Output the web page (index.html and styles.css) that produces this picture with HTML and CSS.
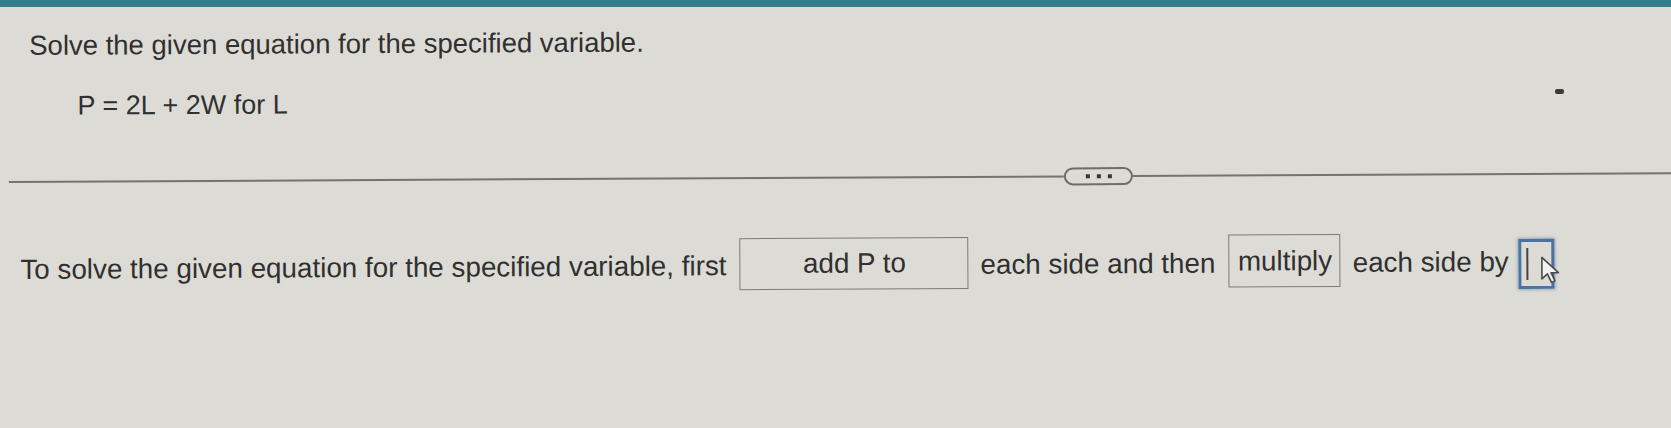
FILE: index.html
```html
<!DOCTYPE html>
<html lang="en">
<head>
<meta charset="utf-8">
<title>Solve the given equation</title>
<link rel="stylesheet" href="styles.css">
</head>
<body>
<div class="topbar"></div>
<main class="page">
  <h1 class="prompt">Solve the given equation for the specified variable.</h1>
  <p class="equation">P = 2L + 2W for L</p>
  <div class="divider">
    <span class="rule rule-left"></span>
    <span class="more" aria-label="More"><i></i><i></i><i></i></span>
    <span class="rule rule-right"></span>
  </div>
  <div class="answer">
    <span class="words">To solve the given equation for the specified variable, first</span>
    <span class="blank blank-wide">add P to</span>
    <span class="words">each side and then</span>
    <span class="blank">multiply</span>
    <span class="words">each side by</span>
    <span class="blank blank-focus">
      <span class="caret"></span>
      <svg class="pointer" viewBox="0 0 22 28" width="22" height="28">
        <path d="M1.5 1.5 L1.5 23 L7 18 L11 26.5 L14.5 25 L10.6 16.8 L18 16.8 Z" fill="#f2f2f0" stroke="#4a4a4a" stroke-width="1.6" stroke-linejoin="round"/>
      </svg>
    </span>
  </div>
</main>
<span class="smudge"></span>
</body>
</html>
```
FILE: styles.css
```css
html, body {
  margin: 0;
  padding: 0;
}

body {
  width: 1671px;
  height: 428px;
  overflow: hidden;
  background: #dcdbd5;
  color: #303030;
  font-family: "Liberation Sans", Arial, sans-serif;
  position: relative;
}

.topbar {
  height: 7px;
  background: #327e8b;
}

.page {
  padding-top: 23px;
  transform: rotate(-0.3deg);
  transform-origin: 0 0;
}

.prompt {
  margin: 0 0 0 29px;
  font-size: 27.5px;
  line-height: 32px;
  font-weight: normal;
}

.equation {
  margin: 28px 0 0 77px;
  font-size: 27px;
  line-height: 32px;
}

.divider {
  margin: 51px 0 0 8px;
  height: 18px;
  display: flex;
  align-items: center;
}

.rule {
  height: 2px;
  background: #74746c;
}

.rule-left {
  width: 1055px;
}

.rule-right {
  flex: 1;
}

.more {
  box-sizing: border-box;
  width: 69px;
  height: 18px;
  border: 2px solid #6e6e68;
  border-radius: 9px;
  display: flex;
  align-items: center;
  justify-content: center;
  gap: 7px;
}

.more i {
  width: 4px;
  height: 4px;
  background: #363636;
}

.answer {
  margin: 50px 0 0 19px;
  height: 53px;
  display: flex;
  align-items: center;
  gap: 12.5px;
  font-size: 27.8px;
  line-height: 32px;
  white-space: nowrap;
}

.words {
  padding-top: 4px;
}

.blank {
  box-sizing: border-box;
  height: 53px;
  padding: 0 7px 0 9px;
  border: 1px solid #7c7c76;
  display: flex;
  align-items: center;
  justify-content: center;
}

.blank-wide {
  width: 229px;
  height: 52px;
}

.blank-focus {
  position: relative;
  width: 36px;
  height: 50px;
  margin-top: 9px;
  margin-left: -3px;
  padding: 0;
  border: 3px solid #4a73a0;
  box-shadow: 0 0 3px 1px rgba(74, 115, 160, 0.45);
  justify-content: flex-start;
}

.caret {
  margin-left: 5px;
  width: 2px;
  height: 32px;
  background: #444;
}

.pointer {
  position: absolute;
  left: 19px;
  top: 14px;
}

.smudge {
  position: absolute;
  left: 1555px;
  top: 89px;
  width: 9px;
  height: 5px;
  border-radius: 2px;
  background: #3a3a38;
}
```
